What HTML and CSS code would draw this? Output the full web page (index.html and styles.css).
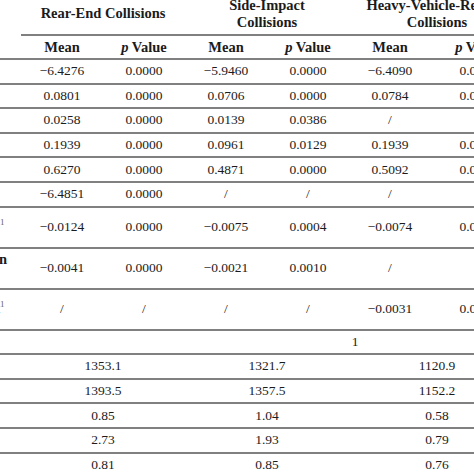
FILE: index.html
```html
<!DOCTYPE html>
<html lang="en">
<head>
<meta charset="utf-8">
<title>Collision model estimates</title>
<link rel="stylesheet" href="styles.css">
</head>
<body>
<div class="frame">
  <div class="tbl">
    <div class="row head1">
      <div class="lab"></div>
      <div class="grp"><span>Rear-End Collisions</span></div>
      <div class="grp"><span>Side-Impact</span><span>Collisions</span></div>
      <div class="grp"><span>Heavy-Vehicle-Related</span><span>Collisions</span></div>
    </div>
    <div class="row head2">
      <div class="lab"></div>
      <div>Mean</div><div><i>p</i> Value</div>
      <div>Mean</div><div><i>p</i> Value</div>
      <div>Mean</div><div><i>p</i> Value</div>
    </div>
    <div class="row">
      <div class="lab"></div>
      <div>&minus;6.4276</div><div>0.0000</div><div>&minus;5.9460</div><div>0.0000</div><div>&minus;6.4090</div><div>0.0000</div>
    </div>
    <div class="row">
      <div class="lab"></div>
      <div>0.0801</div><div>0.0000</div><div>0.0706</div><div>0.0000</div><div>0.0784</div><div>0.0000</div>
    </div>
    <div class="row">
      <div class="lab"></div>
      <div>0.0258</div><div>0.0000</div><div>0.0139</div><div>0.0386</div><div>/</div><div>/</div>
    </div>
    <div class="row">
      <div class="lab"></div>
      <div>0.1939</div><div>0.0000</div><div>0.0961</div><div>0.0129</div><div>0.1939</div><div>0.0000</div>
    </div>
    <div class="row">
      <div class="lab"></div>
      <div>0.6270</div><div>0.0000</div><div>0.4871</div><div>0.0000</div><div>0.5092</div><div>0.0000</div>
    </div>
    <div class="row">
      <div class="lab"></div>
      <div>&minus;6.4851</div><div>0.0000</div><div>/</div><div>/</div><div>/</div><div>/</div>
    </div>
    <div class="row tall">
      <div class="lab lab-sup"><span class="labtext">Speed &times; Age<sup>1</sup></span></div>
      <div>&minus;0.0124</div><div>0.0000</div><div>&minus;0.0075</div><div>0.0004</div><div>&minus;0.0074</div><div>0.0001</div>
    </div>
    <div class="row tall">
      <div class="lab"><span class="labtext">Curve &times; Intersection<br>Lighting</span></div>
      <div>&minus;0.0041</div><div>0.0000</div><div>&minus;0.0021</div><div>0.0010</div><div>/</div><div>/</div>
    </div>
    <div class="row tall">
      <div class="lab lab-sup"><span class="labtext">Truck &times; Night<sup>1</sup></span></div>
      <div>/</div><div>/</div><div>/</div><div>/</div><div>&minus;0.0031</div><div>0.0215</div>
    </div>
    <div class="row">
      <div class="lab"></div>
      <div class="wide4">1</div>
    </div>
    <div class="row">
      <div class="lab"></div>
      <div class="span2">1353.1</div><div class="span2">1321.7</div><div class="span2">1120.9</div>
    </div>
    <div class="row">
      <div class="lab"></div>
      <div class="span2">1393.5</div><div class="span2">1357.5</div><div class="span2">1152.2</div>
    </div>
    <div class="row">
      <div class="lab"></div>
      <div class="span2">0.85</div><div class="span2">1.04</div><div class="span2">0.58</div>
    </div>
    <div class="row">
      <div class="lab"></div>
      <div class="span2">2.73</div><div class="span2">1.93</div><div class="span2">0.79</div>
    </div>
    <div class="row">
      <div class="lab"></div>
      <div class="span2">0.81</div><div class="span2">0.85</div><div class="span2">0.76</div>
    </div>
  </div>
</div>
</body>
</html>
```
FILE: styles.css
```css
html, body {
  margin: 0;
  padding: 0;
  background: #ffffff;
}

body {
  font-family: "Liberation Serif", "Times New Roman", serif;
  color: #1b1b1b;
}

.frame {
  width: 474px;
  height: 474px;
  overflow: hidden;
}

.tbl {
  width: 525px;
}

.row {
  display: grid;
  grid-template-columns: 21px repeat(5, 82px) 94px;
  grid-template-rows: 100%;
  box-sizing: border-box;
  height: 24.6px;
  border-bottom: 2px solid #808080;
  align-items: center;
  text-align: center;
  font-size: 13.5px;
  line-height: 16px;
  white-space: nowrap;
}

.head1 {
  height: 35.5px;
  grid-template-rows: 35.5px;
  border-bottom: 0;
  align-items: stretch;
}

.grp {
  grid-column: span 2;
  box-sizing: border-box;
  height: 35.5px;
  min-height: 0;
  display: flex;
  flex-direction: column;
  justify-content: center;
  align-items: center;
  padding-bottom: 5.5px;
  border-bottom: 2px solid #808080;
  font-weight: bold;
  font-size: 14.5px;
  line-height: 17.5px;
}

.grp span {
  flex: none;
}

.head2 {
  height: 24.5px;
  font-weight: bold;
  font-size: 14.5px;
}

.tall {
  height: 41px;
}

.lab {
  align-self: stretch;
  min-height: 0;
  overflow: hidden;
  display: flex;
  align-items: center;
  justify-content: flex-end;
  padding-right: 14px;
  font-weight: bold;
  font-size: 14.5px;
  line-height: 17.5px;
}

.lab-sup {
  padding-right: 16.5px;
}

.labtext {
  display: block;
  flex: none;
  text-align: left;
}

.labtext sup {
  font-size: 9px;
  font-weight: normal;
  line-height: 0;
  color: #666666;
}

.span2 {
  grid-column: span 2;
}

.wide4 {
  grid-column: 4 / 8;
}
```
